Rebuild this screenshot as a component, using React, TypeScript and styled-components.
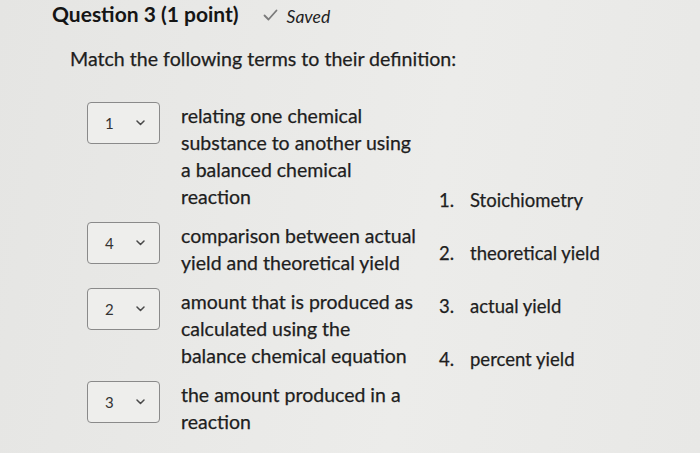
import styled, { createGlobalStyle } from 'styled-components'

const GlobalStyle = createGlobalStyle`
    html, body {
        margin: 0;
        padding: 0;
        background: #e9e9e7;
    }
    body {
        font-family: Lato, "Open Sans", sans-serif;
        color: #222;
    }
`

const definitions = [
    { answer: '1', lines: ['relating one chemical', 'substance to another using', 'a balanced chemical', 'reaction'] },
    { answer: '4', lines: ['comparison between actual', 'yield and theoretical yield'] },
    { answer: '2', lines: ['amount that is produced as', 'calculated using the', 'balance chemical equation'] },
    { answer: '3', lines: ['the amount produced in a', 'reaction'] },
]

const terms = ['Stoichiometry', 'theoretical yield', 'actual yield', 'percent yield']

function Chevron() {
    return (
        <svg width="9" height="6" viewBox="0 0 9 6" aria-hidden="true">
            <path d="M1 1l3.5 3.5L8 1" fill="none" stroke="#4a4a4a" strokeWidth="1.5" strokeLinecap="round" strokeLinejoin="round" />
        </svg>
    )
}

export default function App() {
    return (
        <>
            <GlobalStyle />
            <Page>
                <Header>
                    <Title>Question 3 (1 point)</Title>
                    <Saved>
                        <svg width="15" height="12" viewBox="0 0 15 12" aria-hidden="true">
                            <path d="M1.5 6.5l4 4L13.5 1.5" fill="none" stroke="#7a7a7a" strokeWidth="1.8" strokeLinecap="round" strokeLinejoin="round" />
                        </svg>
                        <em>Saved</em>
                    </Saved>
                </Header>
                <Prompt>Match the following terms to their definition:</Prompt>
                <Matching>
                    <Definitions>
                        {definitions.map((d) => (
                            <Row key={d.answer}>
                                <Select>
                                    <span>{d.answer}</span>
                                    <Chevron />
                                </Select>
                                <Definition>
                                    {d.lines.map((l) => (
                                        <div key={l}>{l}</div>
                                    ))}
                                </Definition>
                            </Row>
                        ))}
                    </Definitions>
                    <Terms>
                        {terms.map((t, i) => (
                            <Term key={t}>
                                <TermNumber>{i + 1}.</TermNumber>
                                <span>{t}</span>
                            </Term>
                        ))}
                    </Terms>
                </Matching>
            </Page>
        </>
    )
}

/*___Styling___*/

const Page = styled.div`
    width: 700px;
    height: 453px;
    overflow: hidden;
    background: linear-gradient(100deg, #e5e5e3 0%, #ececea 60%, #e8e8e6 100%);
`

const Header = styled.div`
    display: flex;
    align-items: baseline;
    gap: 24px;
    padding-left: 52px;
    margin-top: 1px;
    height: 28px;
`

const Title = styled.h1`
    margin: 0;
    font-size: 21px;
    font-weight: 700;
    color: #151515;
`

const Saved = styled.span`
    display: flex;
    align-items: center;
    gap: 9px;
    font-size: 17.5px;
    color: #222;

    svg{
        position: relative;
        top: -1px;
    }
`

const Prompt = styled.p`
    margin: 18px 0 0 70px;
    font-size: 19.6px;
    color: #1e1e1e;
    -webkit-text-stroke: 0.25px #1e1e1e;
`

const Matching = styled.div`
    display: flex;
    margin-top: 32px;
    padding-left: 87px;
`

const Definitions = styled.div`
    display: flex;
    flex-direction: column;
    gap: 12px;
    width: 352px;
`

const Row = styled.div`
    display: flex;
    gap: 21px;
    align-items: flex-start;
`

const Select = styled.div`
    box-sizing: border-box;
    width: 73px;
    height: 42px;
    border: 1.5px solid #8a8a8a;
    border-radius: 4px;
    background: #eeeeec;
    display: flex;
    align-items: center;
    justify-content: space-between;
    padding: 0 14px 0 17px;
    font-size: 15px;
    color: #333;
    flex-shrink: 0;
`

const Definition = styled.div`
    font-size: 19.5px;
    line-height: 27px;
    color: #1e1e1e;
    -webkit-text-stroke: 0.25px #1e1e1e;
`

const Terms = styled.ol`
    list-style: none;
    margin: 85px 0 0 0;
    padding: 0;
    display: flex;
    flex-direction: column;
    gap: 27px;
`

const Term = styled.li`
    display: flex;
    gap: 14px;
    font-size: 18.5px;
    line-height: 26px;
    color: #1e1e1e;
    -webkit-text-stroke: 0.25px #1e1e1e;
`

const TermNumber = styled.span`
    width: 17px;
`
